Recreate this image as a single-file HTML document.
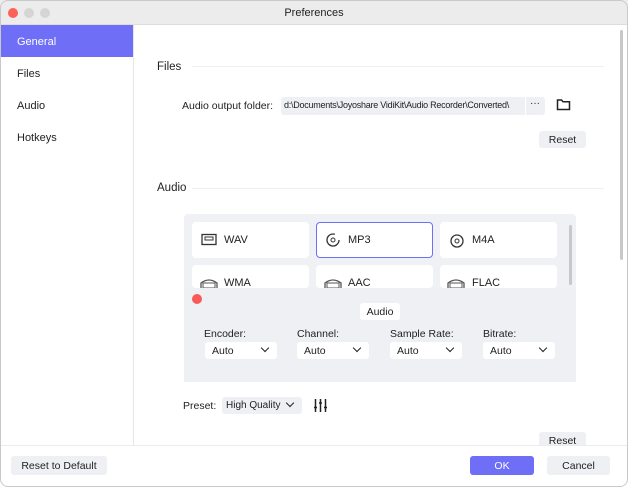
<!DOCTYPE html><html><head><style>
*{box-sizing:border-box;margin:0;padding:0}
body{width:628px;height:487px;font-family:"Liberation Sans",sans-serif;font-size:11px;color:#222;background:#fff;position:relative;overflow:hidden}
.a{position:absolute}
.btn{position:absolute;background:#eef0f4;border-radius:3px;text-align:center;font-size:10.5px}
.card{position:absolute;background:#fff;border-radius:4px;width:117px;height:36px;font-size:11px;overflow:hidden}
.card span{position:absolute;left:32px;top:12px}
.card svg{position:absolute;left:9px;top:11px}
.sel{position:absolute;background:#fff;border-radius:3px;height:17px;width:72px;font-size:10.5px;padding:3px 0 0 7px}
.sel:after{content:"";position:absolute;right:9px;top:3px;width:5px;height:5px;border-right:1.6px solid #222;border-bottom:1.6px solid #222;transform:rotate(45deg)}
.lbl{position:absolute;font-size:10.5px}
</style></head><body>
<div class="a" style="left:0;top:0;width:628px;height:25px;background:#ececec;border-bottom:1px solid #ddd"></div>
<div class="a" style="left:8px;top:8px;width:10px;height:10px;border-radius:50%;background:#fe5f57"></div>
<div class="a" style="left:24px;top:8px;width:10px;height:10px;border-radius:50%;background:#d5d5d5"></div>
<div class="a" style="left:40px;top:8px;width:10px;height:10px;border-radius:50%;background:#d5d5d5"></div>
<div class="a" style="left:0;width:628px;top:7px;text-align:center;font-size:11px">Preferences</div>
<div class="a" style="left:0;top:25px;width:134px;height:420px;border-right:1px solid #e6e6e6"></div>
<div class="a" style="left:1px;top:25px;width:132px;height:32px;background:#6f6ef6"></div>
<div class="a" style="left:17px;top:36px;color:#fff">General</div>
<div class="a" style="left:17px;top:68px">Files</div>
<div class="a" style="left:17px;top:100px">Audio</div>
<div class="a" style="left:17px;top:132px">Hotkeys</div>
<div class="a" style="left:620px;top:30px;width:3px;height:230px;background:#c8c8c8;border-radius:2px"></div>
<div class="a" style="left:157px;top:61px;font-size:11.5px">Files</div>
<div class="a" style="left:192px;top:66px;width:412px;height:1px;background:#efefef"></div>
<div class="a" style="left:182px;top:100px;font-size:10.5px">Audio output folder:</div>
<div class="a" style="left:281px;top:97px;width:264px;height:18px;background:#eef0f4;border-radius:3px"></div>
<div class="a" style="left:284px;top:100px;font-size:9px;letter-spacing:-0.25px;white-space:nowrap">d:\Documents\Joyoshare VidiKit\Audio Recorder\Converted\</div>
<div class="a" style="left:525px;top:97px;width:1px;height:18px;background:#fff"></div>
<div class="a" style="left:530px;top:98px;font-size:10px">···</div>
<svg class="a" style="left:556px;top:98px" width="15" height="13"><path d="M1.5 2h4l1.5 1.7h6.5v7.8H1.5z" fill="none" stroke="#222" stroke-width="1.5"/></svg>
<div class="btn" style="left:539px;top:131px;width:47px;height:17px;padding-top:3px">Reset</div>
<div class="a" style="left:157px;top:182px;font-size:11.5px">Audio</div>
<div class="a" style="left:192px;top:188px;width:412px;height:1px;background:#efefef"></div>
<div class="a" style="left:184px;top:214px;width:392px;height:168px;background:#f0f1f5;border-radius:4px"></div>
<div class="card" style="left:192px;top:222px"><svg width="16" height="14"><rect x="1" y="1.5" width="14" height="10" fill="none" stroke="#333" stroke-width="1.3"/><rect x="4" y="4" width="8" height="3" fill="none" stroke="#333"/></svg><span>WAV</span></div>
<div class="card" style="left:316px;top:222px;border:1.5px solid #6f6ef6"><svg width="16" height="16" style="left:8px;top:9px"><circle cx="8" cy="8" r="6" fill="none" stroke="#333" stroke-width="1.3" stroke-dasharray="30 8"/><circle cx="8" cy="8" r="2" fill="none" stroke="#333"/></svg><span style="left:31px;top:11px">MP3</span></div>
<div class="card" style="left:440px;top:222px"><svg width="16" height="16"><circle cx="8" cy="8" r="6" fill="none" stroke="#333" stroke-width="1.3"/><circle cx="8" cy="8" r="2" fill="none" stroke="#333"/></svg><span>M4A</span></div>
<div class="card" style="left:192px;top:265px;height:23px"><svg width="18" height="14" style="left:8px;top:12px"><path d="M1 13V6q8-6 16 0v7" fill="none" stroke="#555" stroke-width="1.3"/><rect x="3" y="6" width="12" height="5" fill="none" stroke="#555"/></svg><span>WMA</span></div>
<div class="card" style="left:316px;top:265px;height:23px"><svg width="18" height="14" style="left:8px;top:12px"><path d="M1 13V6q8-6 16 0v7" fill="none" stroke="#555" stroke-width="1.3"/><rect x="3" y="6" width="12" height="5" fill="none" stroke="#555"/></svg><span>AAC</span></div>
<div class="card" style="left:440px;top:265px;height:23px"><svg width="18" height="14" style="left:7px;top:12px"><path d="M1 13V6q8-6 16 0v7" fill="none" stroke="#555" stroke-width="1.3"/><rect x="3" y="6" width="12" height="5" fill="none" stroke="#555"/></svg><span>FLAC</span></div>
<div class="a" style="left:569px;top:225px;width:3px;height:60px;background:#c8c8c8;border-radius:2px"></div>
<div class="a" style="left:184px;top:288px;width:392px;height:94px;background:#eff0f4"></div>
<div class="a" style="left:192px;top:294px;width:10px;height:10px;border-radius:50%;background:#f85a5a"></div>
<div class="a" style="left:360px;top:303px;width:40px;height:17px;background:#fff;border-radius:3px;text-align:center;padding-top:3px;font-size:10.5px">Audio</div>
<div class="lbl" style="left:204px;top:328px">Encoder:</div>
<div class="lbl" style="left:297px;top:328px">Channel:</div>
<div class="lbl" style="left:390px;top:328px">Sample Rate:</div>
<div class="lbl" style="left:483px;top:328px">Bitrate:</div>
<div class="sel" style="left:205px;top:342px">Auto</div>
<div class="sel" style="left:297px;top:342px">Auto</div>
<div class="sel" style="left:390px;top:342px">Auto</div>
<div class="sel" style="left:483px;top:342px">Auto</div>
<div class="lbl" style="left:183px;top:400px">Preset:</div>
<div class="sel" style="left:222px;top:397px;width:80px;background:#eef0f4;padding-left:4px;font-size:10px">High Quality</div>
<svg class="a" style="left:313px;top:398px" width="15" height="15"><g stroke="#222" stroke-width="1.5"><path d="M2.5 1v13M7.5 1v13M12.5 1v13"/><path d="M1 9.5h3M6 5h3M11 9.5h3"/></g></svg>
<div class="btn" style="left:539px;top:432px;width:47px;height:17px;padding-top:3px">Reset</div>
<div class="a" style="left:0;top:445px;width:628px;height:42px;background:#fff;border-top:1px solid #ececec"></div>
<div class="btn" style="left:11px;top:456px;width:96px;height:19px;padding-top:4px">Reset to Default</div>
<div class="btn" style="left:470px;top:456px;width:64px;height:19px;padding-top:4px;background:#6f6ef6;color:#fff">OK</div>
<div class="btn" style="left:547px;top:456px;width:63px;height:19px;padding-top:4px">Cancel</div>
<div class="a" style="left:0;top:0;width:628px;height:487px;border:1px solid #c9c9c9;border-radius:8px;pointer-events:none"></div>
</body></html>
